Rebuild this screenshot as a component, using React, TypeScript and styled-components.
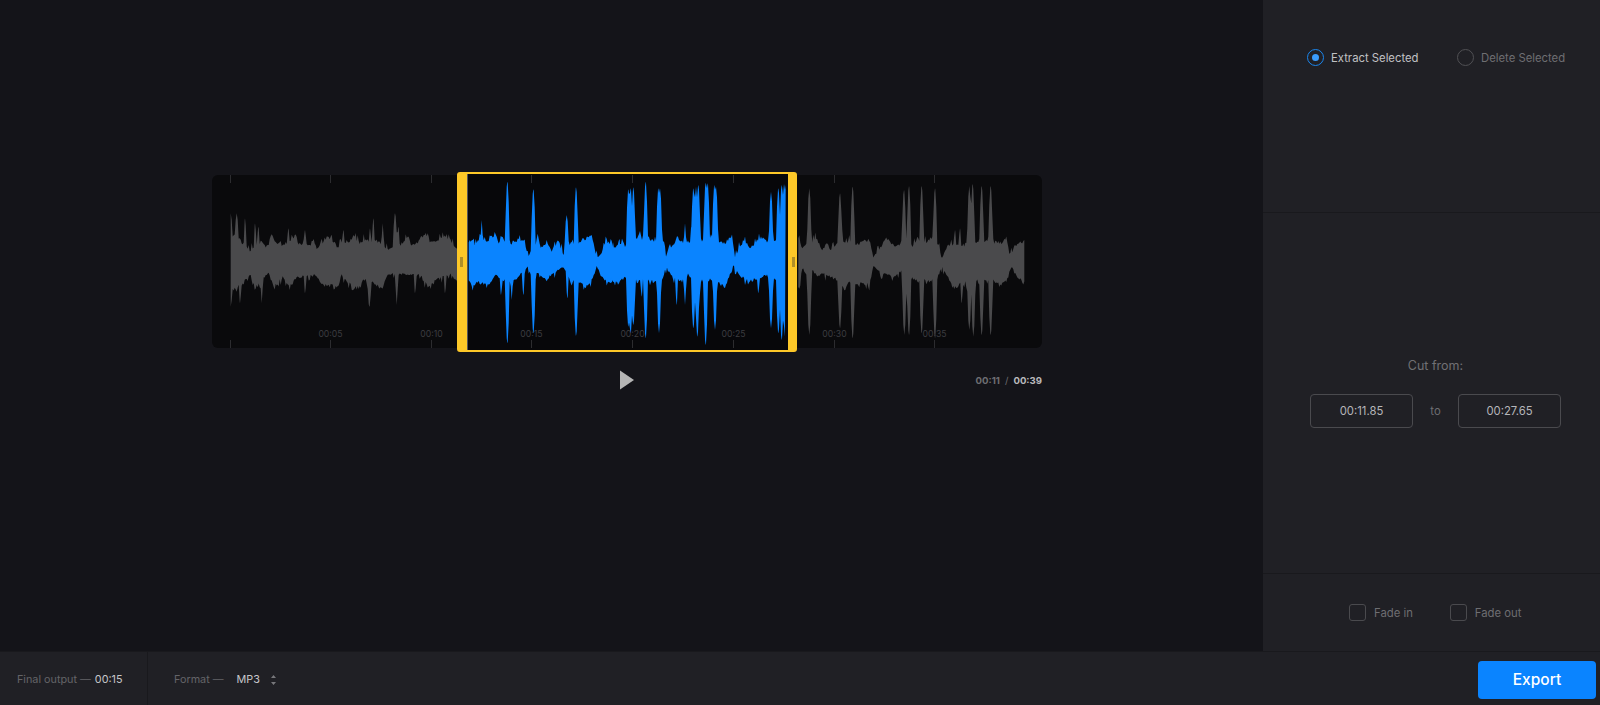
import * as React from 'react'
import styled, { createGlobalStyle } from 'styled-components'

type Point = [number, number]

const GlobalStyle = createGlobalStyle`
  html, body {
    margin: 0;
    padding: 0;
    background: #141419;
    overflow: hidden;
  }
  * {
    box-sizing: border-box;
  }
`

const Page = styled.div`
  width: 1600px;
  height: 705px;
  display: flex;
  flex-direction: column;
  font-family: Inter, "Liberation Sans", sans-serif;
  background: #141419;
`

const Main = styled.div`
  display: flex;
  height: 651px;
`

const Editor = styled.div`
  width: 1263px;
  padding: 175px 221px 0 212px;
`

const Track = styled.div`
  position: relative;
  width: 830px;
  height: 173px;
  border-radius: 6px;
  background: #0a0a0c;
`

const Tick = styled.div<{ $left: number; $bottom?: boolean }>`
  position: absolute;
  left: ${({ $left }) => $left}px;
  ${({ $bottom }) => ($bottom ? 'bottom: 0;' : 'top: 0;')}
  width: 1px;
  height: 8px;
  background: #2c2c2f;
`

const TickLabel = styled.span<{ $left: number }>`
  position: absolute;
  left: ${({ $left }) => $left - 20}px;
  top: 153px;
  width: 41px;
  text-align: center;
  font-size: 8.7px;
  line-height: 12px;
  color: #3c3c40;
`

const Wave = styled.svg`
  position: absolute;
  left: 0;
  top: 0;
`

const Selection = styled.div`
  position: absolute;
  left: 245px;
  top: -3px;
  width: 340px;
  height: 180px;
  border: solid #fdc828;
  border-width: 2px 9px 2px 10px;
  border-radius: 3px;
  background: #07070a;
`

const Grip = styled.span<{ $side: 'left' | 'right' }>`
  position: absolute;
  ${({ $side }) => $side}: -7px;
  top: 83px;
  width: 3px;
  height: 10px;
  background: #b18f27;
`

const InnerLine = styled.span`
  position: absolute;
  left: 0;
  top: 0;
  bottom: 0;
  width: 1px;
  background: #55555a;
`

const Controls = styled.div`
  display: flex;
  align-items: center;
  height: 20px;
  margin-top: 22px;
  padding-left: 408px;
`

const PlayButton = styled.svg`
  display: block;
  flex: none;
`

const Time = styled.div`
  margin-left: auto;
  font-size: 9.6px;
  font-weight: 700;
  color: #6e6e72;
  white-space: nowrap;
`

const TimeTotal = styled.span`
  color: #b9b9bc;
`

const Slash = styled.span`
  margin: 0 5px;
  font-weight: 400;
`

const Sidebar = styled.aside`
  width: 337px;
  display: flex;
  flex-direction: column;
  background: #202025;
`

const TopSection = styled.section`
  height: 213px;
  padding: 49px 0 0 44px;
  display: flex;
  align-items: flex-start;
  gap: 38.5px;
  border-bottom: 1px solid #19191d;
`

const Radio = styled.label`
  display: flex;
  align-items: center;
  height: 17px;
  gap: 7px;
`

const RadioDot = styled.span<{ $checked?: boolean }>`
  width: 17px;
  height: 17px;
  border-radius: 50%;
  border: 1px solid ${({ $checked }) => ($checked ? '#1a85ec' : '#505054')};
  display: flex;
  align-items: center;
  justify-content: center;
  &::after {
    content: '';
    display: ${({ $checked }) => ($checked ? 'block' : 'none')};
    width: 7px;
    height: 7px;
    border-radius: 50%;
    background: #3a9bfb;
  }
`

const RadioLabel = styled.span<{ $checked?: boolean }>`
  font-size: 11.3px;
  white-space: nowrap;
  color: ${({ $checked }) => ($checked ? '#c0c0c4' : '#6e6e72')};
`

const CutSection = styled.section`
  height: 361px;
  padding: 145px 0 0 8px;
  border-bottom: 1px solid #19191d;
  display: flex;
  flex-direction: column;
  align-items: center;
`

const CutTitle = styled.div`
  font-size: 12.5px;
  line-height: 16px;
  color: #707074;
`

const CutRow = styled.div`
  display: flex;
  align-items: center;
  margin-top: 20px;
`

const TimeBox = styled.div`
  width: 103px;
  height: 34px;
  border: 1px solid #4a4a4e;
  border-radius: 4px;
  display: flex;
  align-items: center;
  justify-content: center;
  font-size: 11.3px;
  color: #b6b6ba;
`

const ToText = styled.span`
  width: 45px;
  text-align: center;
  font-size: 11.3px;
  color: #6e6e72;
`

const FadeSection = styled.section`
  flex: 1;
  display: flex;
  align-items: flex-start;
  padding: 30px 0 0 86px;
  gap: 37px;
`

const Check = styled.label`
  display: flex;
  align-items: center;
  height: 17px;
  gap: 8px;
  font-size: 11.3px;
  color: #6e6e72;
`

const CheckBox = styled.span`
  width: 17px;
  height: 17px;
  border: 1px solid #4a4a4e;
  border-radius: 3px;
`

const BottomBar = styled.footer`
  height: 54px;
  display: flex;
  align-items: center;
  background: #202025;
  border-top: 1px solid #19191d;
`

const OutputCell = styled.div`
  width: 148px;
  height: 100%;
  padding: 2px 0 0 17px;
  display: flex;
  align-items: center;
  border-right: 1px solid #19191d;
  font-size: 10.8px;
  color: #646468;
  white-space: nowrap;
`

const Value = styled.span`
  color: #c6c6ca;
  margin-left: 4px;
`

const FormatCell = styled.div`
  display: flex;
  align-items: center;
  padding: 2px 0 0 26px;
  font-size: 10.8px;
  color: #646468;
  white-space: nowrap;
`

const FormatValue = styled.span`
  margin-left: 13px;
  color: #c6c6ca;
`

const Stepper = styled.svg`
  margin-left: 10px;
  display: block;
`

const ExportButton = styled.button`
  margin-left: auto;
  margin-right: 4px;
  margin-top: 3px;
  padding: 0 0 2px;
  width: 118px;
  height: 38px;
  border: 0;
  border-radius: 4px;
  background: #0a84ff;
  color: #ffffff;
  font-family: inherit;
  font-size: 15.5px;
  font-weight: 500;
`

// contours read off the reference at 3x; x = origin + zx / 3, y = 160 + zy / 3
const leftTop: Point[] = [[92,160],[100,215],[110,160],[118,225],[125,240],[135,175],[150,270],[165,190],[175,200],[185,235],[195,255],[205,250],[215,215],[225,240],[235,245],[245,250],[265,205],[275,235],[285,215],[295,245],[315,210],[330,255],[340,225],[350,265],[365,240],[380,225],[395,230],[410,255],[430,210],[445,240],[460,220],[480,245],[490,235],[510,205],[520,175],[530,235],[548,190],[570,265],[585,160],[595,200],[610,245],[625,225],[635,255],[650,240],[675,220],[690,240],[705,235],[725,225],[745,225],[772,265]]
const leftBottom: Point[] = [[92,440],[105,395],[120,430],[130,375],[150,345],[165,395],[185,430],[205,340],[220,390],[250,355],[270,385],[290,355],[315,400],[345,350],[375,385],[390,370],[410,395],[425,350],[445,375],[470,395],[490,360],[508,440],[525,380],[545,395],[565,345],[590,435],[615,345],[645,400],[660,350],[685,390],[710,365],[735,400],[750,345],[772,370]]

const blueATop: Point[] = [[806,240],[815,230],[825,245],[835,235],[845,180],[855,235],[870,230],[885,215],[895,245],[905,220],[914,240],[922,65],[930,245],[950,235],[970,230],[985,290],[993,265],[1000,88],[1007,260],[1012,215],[1025,265],[1040,240],[1055,270],[1075,235],[1090,285],[1100,165],[1110,245],[1120,240],[1128,82],[1136,240],[1155,230],[1175,218],[1190,295],[1205,275],[1220,235],[1240,265],[1260,250]]
const blueABottom: Point[] = [[806,370],[820,385],[835,370],[860,385],[885,350],[903,405],[912,365],[922,550],[930,365],[935,420],[950,360],[970,405],[985,320],[992,345],[1000,520],[1007,345],[1015,345],[1040,365],[1060,340],[1090,322],[1102,415],[1112,370],[1120,370],[1128,528],[1136,375],[1150,385],[1170,380],[1190,320],[1205,355],[1225,370],[1260,370]]

const blueBTop: Point[] = [[0,250],[10,260],[25,255],[40,240],[48,265],[52,240],[55,88],[60,240],[62,85],[70,82],[75,235],[90,215],[100,240],[107,65],[115,225],[125,235],[135,240],[141,230],[145,85],[150,85],[155,220],[168,290],[175,260],[190,250],[200,225],[215,240],[225,190],[235,240],[244,200],[250,85],[258,80],[265,75],[275,235],[282,230],[287,68],[293,70],[297,225],[308,230],[313,75],[318,80],[325,240],[345,245],[365,215],[375,290],[390,255],[405,235],[420,265],[440,235],[460,225],[475,240],[483,95],[490,240],[500,235],[505,85],[515,75],[522,72],[527,75]]
const blueBBottom: Point[] = [[0,355],[25,375],[48,355],[55,500],[62,520],[70,495],[80,360],[95,410],[100,365],[107,535],[114,365],[120,365],[135,370],[147,520],[155,370],[168,320],[190,360],[200,435],[215,370],[225,435],[238,340],[250,505],[262,530],[270,400],[278,365],[287,555],[295,365],[300,360],[308,365],[315,510],[325,370],[345,390],[370,315],[390,350],[415,370],[445,400],[470,350],[483,505],[495,365],[500,370],[505,520],[515,540],[525,530]]

const rightTop: Point[] = [[565,225],[575,260],[590,250],[598,85],[605,240],[620,225],[635,270],[650,245],[665,270],[680,250],[690,100],[697,210],[712,240],[722,235],[728,80],[738,250],[760,240],[778,235],[790,290],[810,260],[830,230],[850,250],[870,250],[877,220],[882,90],[888,240],[897,78],[905,260],[920,230],[928,230],[935,78],[945,240],[958,230],[968,230],[975,85],[985,250],[995,295],[1015,250],[1035,210],[1050,205],[1065,250],[1072,230],[1078,78],[1084,200],[1088,72],[1095,240],[1108,235],[1115,78],[1125,240],[1135,235],[1142,78],[1150,240],[1175,245],[1190,225],[1200,295],[1210,260],[1225,250],[1235,240],[1243,240]]
const rightBottom: Point[] = [[565,395],[578,325],[590,350],[598,525],[605,330],[620,350],[640,345],[665,355],[682,370],[690,505],[700,390],[720,370],[728,535],[738,375],[778,385],[790,320],[820,345],[850,355],[875,335],[883,525],[890,370],[897,525],[905,360],[926,370],[935,520],[945,365],[965,370],[975,535],[985,350],[995,320],[1030,390],[1055,430],[1070,370],[1078,510],[1090,530],[1100,365],[1108,370],[1115,525],[1125,365],[1135,370],[1142,525],[1150,365],[1170,385],[1190,365],[1205,320],[1225,360],[1243,365]]

const CENTER = 305
const SPIKE_MIN = 90

let seed = 7
function rnd() {
  seed = (seed * 16807) % 2147483647
  return seed / 2147483647
}

// turns key points into a finely jagged edge: body with noise, plus rounded spikes
function edge(points: Point[]): Point[] {
  const dist = (p: Point) => Math.abs(p[1] - CENTER)
  const sign = points[0][1] < CENTER ? -1 : 1
  const spikes = points.filter(p => dist(p) > SPIKE_MIN)
  const body = points.filter(p => dist(p) <= SPIKE_MIN)
  const bodyAt = (x: number) => {
    const next = body.findIndex(p => p[0] >= x)
    if (next <= 0) return dist(body[next === 0 ? 0 : body.length - 1])
    const a = body[next - 1]
    const b = body[next]
    return dist(a) + ((dist(b) - dist(a)) * (x - a[0])) / (b[0] - a[0])
  }
  const first = points[0][0]
  const last = points[points.length - 1][0]
  const xs = spikes.map(p => p[0])
  for (let x = first; x <= last; x += 3) xs.push(x)
  xs.push(last)
  xs.sort((a, b) => a - b)
  return xs.map(x => {
    const r = rnd()
    let d = bodyAt(x) * (1 - r * 0.22)
    if (r > 0.76) d += rnd() * 26
    spikes.forEach(s => {
      const h = dist(s)
      const w = h > 130 ? 8 : 5
      const t = Math.abs(x - s[0]) / w
      if (t < 1) d = Math.max(d, h * (1 - t * t))
    })
    return [x, CENTER + sign * d] as Point
  })
}

// svg sits on the track, whose corner is (212, 175) in the page
function contour(top: Point[], bottom: Point[], originX: number) {
  const map = ([zx, zy]: Point) =>
    `${(originX + zx / 3 - 212).toFixed(1)},${(160 + zy / 3 - 175).toFixed(1)}`
  return [...edge(top).map(map), ...edge(bottom).reverse().map(map)].join(' ')
}

const leftShape = contour(leftTop, leftBottom, 200)
const rightShape = contour(rightTop, rightBottom, 610)
const blueShapeA = contour(blueATop, blueABottom, 200)
const blueShapeB = contour(blueBTop, blueBBottom, 610)

const ticks = [18, 118, 219, 319, 420, 521, 622, 722]
const labels = ['00:05', '00:10', '00:15', '00:20', '00:25', '00:30', '00:35']

export default function App() {
  return (
    <Page>
      <GlobalStyle />
      <Main>
        <Editor>
          <Track>
            <Wave width="830" height="173">
              <polygon points={leftShape} fill="#4a4a4c" />
              <polygon points={rightShape} fill="#4a4a4c" />
            </Wave>
            <Selection>
              <Grip $side="left" />
              <Grip $side="right" />
              <InnerLine />
            </Selection>
            {ticks.map(left => (
              <Tick key={left} $left={left} />
            ))}
            {ticks.map(left => (
              <Tick key={left} $left={left} $bottom />
            ))}
            <Wave width="830" height="173">
              <polygon points={blueShapeA} fill="#0a84ff" />
              <polygon points={blueShapeB} fill="#0a84ff" />
            </Wave>
            {labels.map((label, i) => (
              <TickLabel key={label} $left={ticks[i + 1]}>
                {label}
              </TickLabel>
            ))}
          </Track>
          <Controls>
            <PlayButton width="14" height="20" viewBox="0 0 14 20">
              <path d="M0 .5 14 10 0 19.5Z" fill="#b5b5b5" />
            </PlayButton>
            <Time>
              00:11<Slash>/</Slash>
              <TimeTotal>00:39</TimeTotal>
            </Time>
          </Controls>
        </Editor>
        <Sidebar>
          <TopSection>
            <Radio>
              <RadioDot $checked />
              <RadioLabel $checked>Extract Selected</RadioLabel>
            </Radio>
            <Radio>
              <RadioDot />
              <RadioLabel>Delete Selected</RadioLabel>
            </Radio>
          </TopSection>
          <CutSection>
            <CutTitle>Cut from:</CutTitle>
            <CutRow>
              <TimeBox>00:11.85</TimeBox>
              <ToText>to</ToText>
              <TimeBox>00:27.65</TimeBox>
            </CutRow>
          </CutSection>
          <FadeSection>
            <Check>
              <CheckBox />
              Fade in
            </Check>
            <Check>
              <CheckBox />
              Fade out
            </Check>
          </FadeSection>
        </Sidebar>
      </Main>
      <BottomBar>
        <OutputCell>
          Final output —<Value>00:15</Value>
        </OutputCell>
        <FormatCell>
          Format —<FormatValue>MP3</FormatValue>
          <Stepper width="7" height="12" viewBox="0 0 7 12">
            <path d="M3.5 1 6 4H1ZM3.5 11 1 8h5Z" fill="#77777b" />
          </Stepper>
        </FormatCell>
        <ExportButton>Export</ExportButton>
      </BottomBar>
    </Page>
  )
}
